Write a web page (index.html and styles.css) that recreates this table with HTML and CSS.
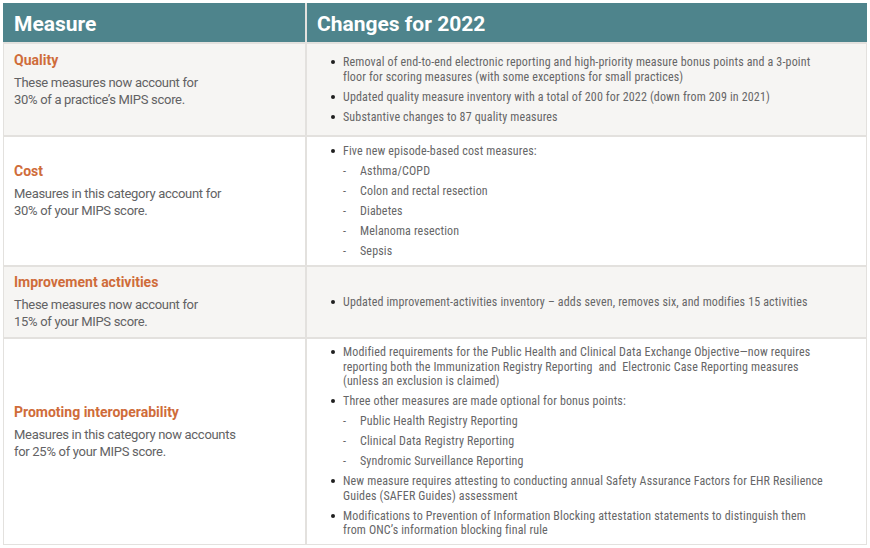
FILE: index.html
```html
<!DOCTYPE html>
<html lang="en">
<head>
<meta charset="utf-8">
<title>MIPS changes for 2022</title>
<link rel="stylesheet" href="styles.css">
</head>
<body>
<div class="table">
  <div class="th th-left">Measure</div>
  <div class="th th-right">Changes for 2022</div>

  <div class="cell left shade raised">
    <div class="cat">Quality</div>
    <p class="desc">These measures now account for<br>30% of a practice’s MIPS score.</p>
  </div>
  <div class="cell right shade">
    <ul class="bullets">
      <li>Removal of end-to-end electronic reporting and high-priority measure bonus points and a 3-point floor for scoring measures (with some exceptions for small practices)</li>
      <li>Updated quality measure inventory with a total of 200 for 2022 (down from 209 in 2021)</li>
      <li>Substantive changes to 87 quality measures</li>
    </ul>
  </div>

  <div class="cell left raised">
    <div class="cat">Cost</div>
    <p class="desc">Measures in this category account for<br>30% of your MIPS score.</p>
  </div>
  <div class="cell right">
    <ul class="bullets">
      <li>Five new episode-based cost measures:
        <ul class="dashes">
          <li>Asthma/COPD</li>
          <li>Colon and rectal resection</li>
          <li>Diabetes</li>
          <li>Melanoma resection</li>
          <li>Sepsis</li>
        </ul>
      </li>
    </ul>
  </div>

  <div class="cell left shade">
    <div class="cat">Improvement activities</div>
    <p class="desc">These measures now account for<br>15% of your MIPS score.</p>
  </div>
  <div class="cell right shade">
    <ul class="bullets">
      <li>Updated improvement-activities inventory – adds seven, removes six, and modifies 15 activities</li>
    </ul>
  </div>

  <div class="cell left raised">
    <div class="cat">Promoting interoperability</div>
    <p class="desc">Measures in this category now accounts<br>for 25% of your MIPS score.</p>
  </div>
  <div class="cell right">
    <ul class="bullets">
      <li>Modified requirements for the Public Health and Clinical Data Exchange Objective—now requires reporting both the Immunization Registry Reporting&nbsp; and&nbsp; Electronic Case Reporting measures (unless an exclusion is claimed)</li>
      <li>Three other measures are made optional for bonus points:
        <ul class="dashes">
          <li>Public Health Registry Reporting</li>
          <li>Clinical Data Registry Reporting</li>
          <li>Syndromic Surveillance Reporting</li>
        </ul>
      </li>
      <li>New measure requires attesting to conducting annual Safety Assurance Factors for EHR Resilience Guides (SAFER Guides) assessment</li>
      <li>Modifications to Prevention of Information Blocking attestation statements to distinguish them from ONC’s information blocking final rule</li>
    </ul>
  </div>
</div>
</body>
</html>
```

FILE: styles.css
```css
html, body {
  margin: 0;
  padding: 0;
  background: #ffffff;
}

body {
  padding: 3px 0 0 3px;
  font-family: Roboto, "Noto Sans", sans-serif;
  color: #58595b;
}

.table {
  width: 864px;
  display: grid;
  grid-template-columns: 301px 1fr;
  grid-template-rows: 39px 91px 128px 70px 205px;
  column-gap: 2px;
  row-gap: 2px;
  background: #e3e1de;
  padding: 0 1px 1px 1px;
  box-sizing: border-box;
}

.th {
  background: #4e848c;
  color: #ffffff;
  font-weight: 700;
  font-size: 21px;
  display: flex;
  align-items: center;
  padding-top: 2px;
}

.th-left {
  margin-left: -1px;
  padding-left: 11px;
}

.th-right {
  margin-right: -1px;
  padding-left: 10px;
}

.cell {
  background: #ffffff;
  display: flex;
  flex-direction: column;
  justify-content: center;
}

.cell.shade {
  background: #f6f5f3;
}

.left {
  padding: 0 10px;
}

.left.raised {
  padding-bottom: 20px;
}

.cat {
  color: #cf6c3a;
  font-weight: 700;
  font-size: 14px;
  line-height: 17px;
  margin-bottom: 5px;
}

.desc {
  margin: 0;
  font-size: 13px;
  line-height: 17px;
  letter-spacing: -0.3px;
  color: #626264;
}

.right {
  padding: 0 41px 0 24px;
}

.bullets {
  list-style: none;
  margin: 0;
  padding: 0;
  font-family: "Liberation Sans Narrow", "Roboto Condensed", Roboto, sans-serif;
  font-size: 12px;
  letter-spacing: 0.15px;
  line-height: 14.5px;
  color: #666667;
}

.bullets > li {
  position: relative;
  padding-left: 12px;
  margin-bottom: 5.5px;
}

.bullets > li:last-child {
  margin-bottom: 0;
}

.bullets > li::before {
  content: "";
  position: absolute;
  left: 0;
  top: 5px;
  width: 4px;
  height: 4px;
  border-radius: 50%;
  background: #1f1f1f;
}

.dashes {
  list-style: none;
  margin: 5.5px 0 0 0;
  padding: 0;
}

.dashes > li {
  position: relative;
  padding-left: 17px;
  margin-bottom: 5.5px;
}

.dashes > li:last-child {
  margin-bottom: 0;
}

.dashes > li::before {
  content: "-";
  position: absolute;
  left: 0;
  top: 0;
}
```
